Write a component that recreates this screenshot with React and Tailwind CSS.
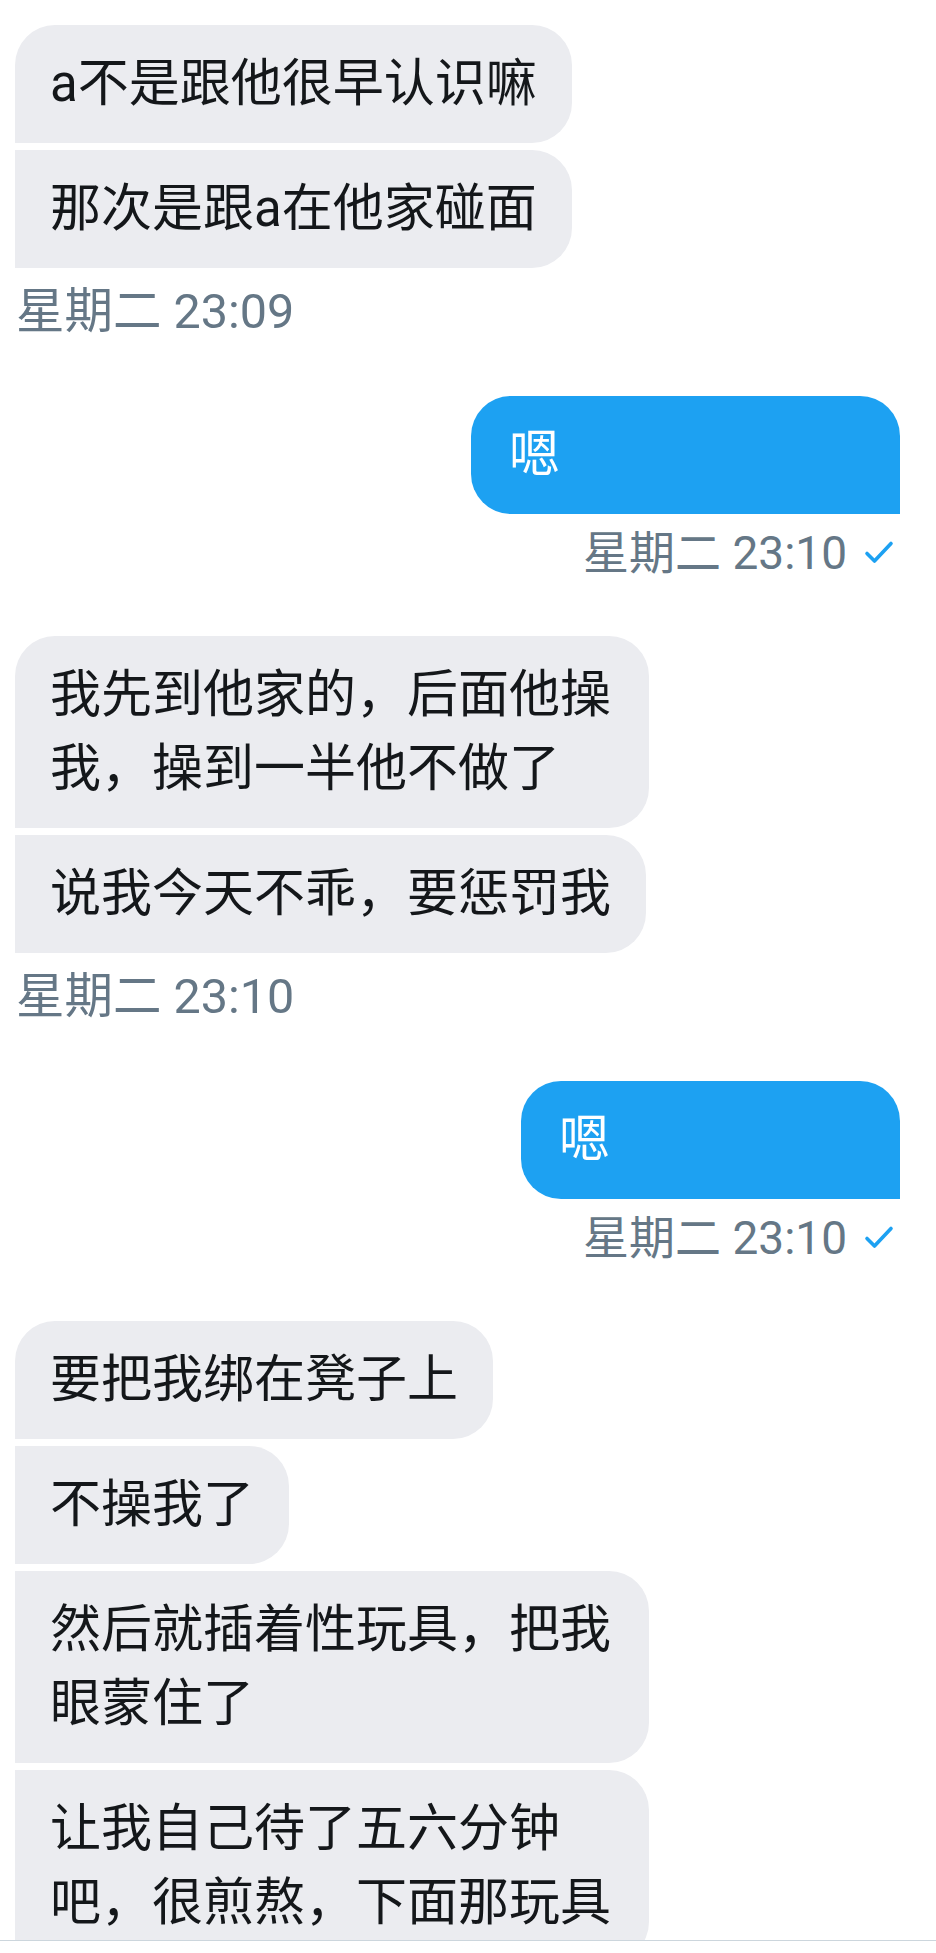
import { Fragment } from 'react'

const thread = [
  { side: 'in', time: '星期二 23:09', bubbles: ['a不是跟他很早认识嘛', '那次是跟a在他家碰面'] },
  { side: 'out', time: '星期二 23:10', bubbles: [{ text: '嗯', width: 'w-[429px]' }] },
  { side: 'in', time: '星期二 23:10', bubbles: ['我先到他家的，后面他操我，操到一半他不做了', '说我今天不乖，要惩罚我'] },
  { side: 'out', time: '星期二 23:10', bubbles: [{ text: '嗯', width: 'w-[379px]' }] },
  {
    side: 'in',
    bubbles: ['要把我绑在凳子上', '不操我了', '然后就插着性玩具，把我眼蒙住了', '让我自己待了五六分钟吧，很煎熬，下面那玩具'],
  },
]

function Check() {
  return (
    <svg width="30" height="30" viewBox="0 0 30 30" fill="none" className="shrink-0">
      <path d="M3 15.5l7.5 7.5L27 5.5" stroke="#1da1f2" strokeWidth="3.6" strokeLinecap="round" strokeLinejoin="round" />
    </svg>
  )
}

function Incoming({ group, first }) {
  return (
    <div className={`flex flex-col items-start ${first ? '' : 'mt-[54px]'}`}>
      <div className="flex flex-col items-start gap-[7px]">
        {group.bubbles.map((text, i) => (
          <div
            key={i}
            className={`max-w-[634px] bg-[#ebecf0] text-[#14171a] pl-[35px] pr-[35px] py-[22px] text-[51px] leading-[74px] rounded-r-[40px] ${
              i === 0 ? 'rounded-tl-[40px]' : ''
            }`}
          >
            {text}
          </div>
        ))}
      </div>
      {group.time && (
        <div className="mt-[15px] pl-[1px] text-[48.5px] leading-[58px] text-[#657786]">{group.time}</div>
      )}
    </div>
  )
}

function Outgoing({ group }) {
  return (
    <div className="flex flex-col items-end mt-[55px]">
      {group.bubbles.map((b, i) => (
        <div
          key={i}
          className={`${b.width} bg-[#1da1f2] text-white pl-[38px] pr-[35px] py-[22px] text-[51px] leading-[74px] rounded-l-[40px] rounded-tr-[40px]`}
        >
          {b.text}
        </div>
      ))}
      <div className="mt-[10px] pr-[6px] flex items-center gap-[17px] text-[46px] leading-[58px] text-[#657786]">
        <span>{group.time}</span>
        <Check />
      </div>
    </div>
  )
}

export default function App() {
  return (
    <div
      className="w-[936px] h-[1953px] bg-white overflow-hidden flex flex-col"
      style={{ fontFamily: 'Roboto, "Noto Sans CJK SC", sans-serif' }}
    >
      {/* conversation */}
      <div className="h-[1940px] shrink-0 overflow-hidden pt-[25px] pl-[15px] pr-[36px]">
        {thread.map((group, i) => (
          <Fragment key={i}>
            {group.side === 'in' ? <Incoming group={group} first={i === 0} /> : <Outgoing group={group} />}
          </Fragment>
        ))}
      </div>

      {/* composer edge */}
      <div className="flex-1 border-t border-[#ccd6dd] bg-white" />
    </div>
  )
}
